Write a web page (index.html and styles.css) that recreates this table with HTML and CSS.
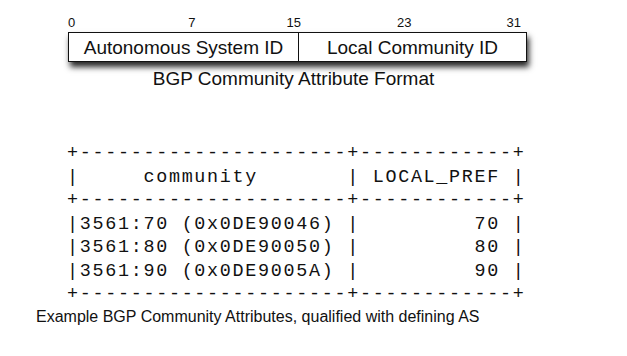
FILE: index.html
```html
<!DOCTYPE html>
<html>
<head>
<meta charset="utf-8">
<link rel="stylesheet" href="styles.css">
</head>
<body>
<div class="page">
  <section class="format">
    <div class="bits">
      <span class="bit b0">0</span>
      <span class="bit b7">7</span>
      <span class="bit b15">15</span>
      <span class="bit b23">23</span>
      <span class="bit b31">31</span>
    </div>
    <div class="box">
      <div class="cell left">Autonomous System ID</div>
      <div class="cell right">Local Community ID</div>
    </div>
    <div class="caption1">BGP Community Attribute Format</div>
  </section>
  <pre class="table">+---------------------+------------+
|     community       | LOCAL_PREF |
+---------------------+------------+
|3561:70 (0x0DE90046) |         70 |
|3561:80 (0x0DE90050) |         80 |
|3561:90 (0x0DE9005A) |         90 |
+---------------------+------------+</pre>
  <div class="caption2">Example BGP Community Attributes, qualified with defining AS</div>
</div>
</body>
</html>
```
FILE: styles.css
```css
html, body {
  margin: 0;
  padding: 0;
  background: #fff;
}
.page {
  width: 627px;
  height: 356px;
  position: relative;
  overflow: hidden;
  font-family: "Liberation Sans", Arial, sans-serif;
  color: #111;
}
.format {
  padding-top: 15px;
  padding-left: 68px;
  width: 459px;
}
.bits {
  display: flex;
  font-size: 13px;
  line-height: 15px;
  height: 17px;
}
.b7 { margin-left: 113px; }
.b15 { margin-left: 91px; }
.b23 { margin-left: 96px; }
.b31 { margin-left: 95px; }
.box {
  display: flex;
  height: 30px;
  box-sizing: border-box;
  border: 1.5px solid #111;
  background: #fff;
  box-shadow: 2px 5px 6px rgba(0,0,0,0.85);
}
.cell {
  display: flex;
  align-items: center;
  justify-content: center;
  font-size: 19px;
  line-height: 1;
}
.cell.left {
  width: 229px;
  border-right: 1.5px solid #111;
}
.cell.right {
  flex: 1;
}
.caption1 {
  font-size: 19px;
  line-height: 22px;
  text-align: center;
  margin-top: 6px;
  padding-right: 8px;
}
.table {
  margin: 0;
  margin-top: 52px;
  margin-left: 67px;
  font-family: "Liberation Mono", "Courier New", monospace;
  font-size: 18.4px;
  letter-spacing: 1.7px;
  line-height: 23.5px;
  color: #111;
}
.caption2 {
  font-size: 16px;
  line-height: 19px;
  margin-top: 0;
  margin-left: 36px;
}
```
